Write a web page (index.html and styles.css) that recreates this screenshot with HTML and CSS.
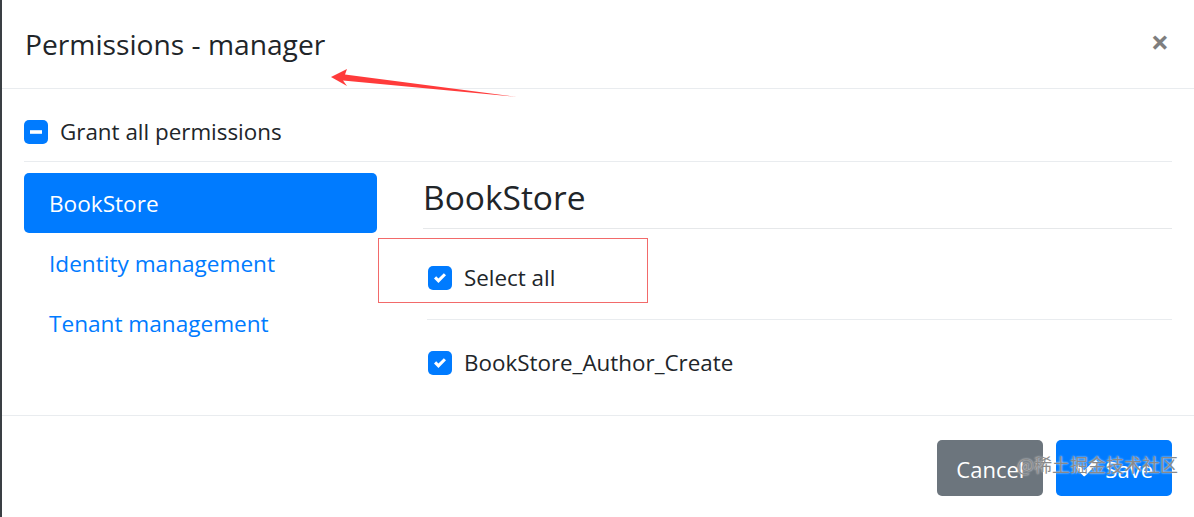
FILE: index.html
```html
<!DOCTYPE html>
<html>
	<head>
		<meta charset="utf-8">
		<title>Permissions - manager</title>
		<link rel="stylesheet" href="styles.css">
	</head>
	<body>
		<div class="modal">
			<header class="modal-header">
				<h5 class="modal-title">Permissions - manager</h5>
				<button class="close" type="button">×</button>
				<!-- 标注箭头 -->
				<svg class="mark-arrow" width="200" height="40" viewBox="320 65 200 40">
					<polygon points="331,77 347,69 345,74.5 518,97 343,80.5 347,86" fill="#ff3b3b"/>
				</svg>
			</header>

			<div class="modal-body">
				<label class="check grant">
					<span class="box indeterminate">
						<svg viewBox="0 0 8 8" width="24" height="24"><path d="M2 4h4" stroke="#fff" stroke-width="1.2"/></svg>
					</span>
					Grant all permissions
				</label>
				<hr class="sep">

				<div class="cols">
					<ul class="pills">
						<li class="active">BookStore</li>
						<li>Identity management</li>
						<li>Tenant management</li>
					</ul>

					<div class="group">
						<h4 class="group-title">BookStore</h4>
						<div class="select-all">
							<label class="check">
								<span class="box checked">
									<svg viewBox="0 0 8 8" width="12" height="12"><path d="M6.564.75l-3.59 3.612-1.538-1.55L0 4.26 2.974 7.25 8 2.193z" fill="#fff"/></svg>
								</span>
								Select all
							</label>
							<div class="mark-box"></div>
						</div>
						<hr class="sep inner">
						<label class="check">
							<span class="box checked">
								<svg viewBox="0 0 8 8" width="12" height="12"><path d="M6.564.75l-3.59 3.612-1.538-1.55L0 4.26 2.974 7.25 8 2.193z" fill="#fff"/></svg>
							</span>
							BookStore_Author_Create
						</label>
					</div>
				</div>
			</div>

			<footer class="modal-footer">
				<button class="btn btn-secondary" type="button">Cancel</button>
				<button class="btn btn-primary" type="button">
					<svg viewBox="0 0 512 512" width="22" height="22"><path fill="#fff" d="M173.9 439.4l-166.4-166.4c-10-10-10-26.2 0-36.2l36.2-36.2c10-10 26.2-10 36.2 0L192 312.7 432.1 72.6c10-10 26.2-10 36.2 0l36.2 36.2c10 10 10 26.2 0 36.2L210.1 439.4c-10 10-26.2 10-36.2 0z"/></svg>
					Save
				</button>
				<span class="watermark">@稀土掘金技术社区</span>
			</footer>
		</div>
	</body>
</html>
```

FILE: styles.css
```css
body {
	margin: 0;
	background: #fff;
	font-family: "Open Sans", "Noto Sans CJK SC", sans-serif;
	color: #212529;
}

.modal {
	position: relative;
	height: 517px;
	border-left: 2px solid #3a3f44;
	overflow: hidden;
}

/* 头部 */
.modal-header {
	position: relative;
	display: flex;
	align-items: center;
	justify-content: space-between;
	height: 88px;
	padding: 0 25px 0 23px;
	border-bottom: 1px solid #e9ecef;
}

.modal-title {
	margin: 0;
	font-size: 28.2px;
	font-weight: 400;
	line-height: 1.5;
}

.close {
	padding: 0;
	border: 0;
	background: none;
	font: bold 32px/1 "Open Sans", sans-serif;
	color: #000;
	opacity: 0.5;
	margin-top: -4px;
}

.mark-arrow {
	position: absolute;
	left: 318px;
	top: 65px;
}

/* 主体 */
.modal-body {
	padding: 28px 22px 37px 22px;
}

.check {
	display: flex;
	align-items: center;
	gap: 12px;
	font-size: 22.4px;
	line-height: 30px;
}

.box {
	display: flex;
	align-items: center;
	justify-content: center;
	width: 24px;
	height: 24px;
	border-radius: 5px;
	background: #007bff;
	flex: none;
}

.sep {
	margin: 14px 0 0;
	border: 0;
	border-top: 1px solid #e9ecef;
}

.cols {
	display: grid;
	grid-template-columns: 353px 1fr;
	column-gap: 46px;
	margin-top: 11px;
}

.pills {
	list-style: none;
	margin: 0;
	padding: 0;
}

.pills li {
	height: 60px;
	padding: 0 25px;
	border-radius: 5px;
	font-size: 22.6px;
	line-height: 62px;
	color: #007bff;
}

.pills li.active {
	background: #007bff;
	color: #fff;
}

.group-title {
	margin: 6px 0 0;
	padding-bottom: 13px;
	border-bottom: 1px solid #e6e8ea;
	font-size: 33.5px;
	font-weight: 400;
	line-height: 36px;
}

.group .check {
	margin-left: 5px;
}

.select-all {
	position: relative;
	margin-top: 34px;
}

.mark-box {
	position: absolute;
	left: -45px;
	top: -25px;
	width: 268px;
	height: 63px;
	border: 1px solid #f26a6a;
}

.sep.inner {
	margin: 26px 0 28px 4px;
}

/* 底部 */
.modal-footer {
	position: relative;
	display: flex;
	justify-content: flex-end;
	gap: 13px;
	padding: 24px 22px;
	border-top: 1px solid #e9ecef;
}

.btn {
	display: flex;
	align-items: center;
	gap: 7px;
	height: 56px;
	padding: 2px 19px 0;
	border: 0;
	border-radius: 5px;
	font: 22px "Open Sans", sans-serif;
	color: #fff;
}

.btn svg {
	margin-top: -2px;
}

.btn-secondary {
	background: #6c757d;
}

.btn-primary {
	padding-left: 20px;
	background: #007bff;
}

.watermark {
	position: absolute;
	right: 16px;
	top: 36px;
	font-size: 18px;
	line-height: 24px;
	color: #8a8a8a;
	text-shadow: 0 0 2px #fff;
	font-family: "Noto Sans CJK SC", sans-serif;
}
```
